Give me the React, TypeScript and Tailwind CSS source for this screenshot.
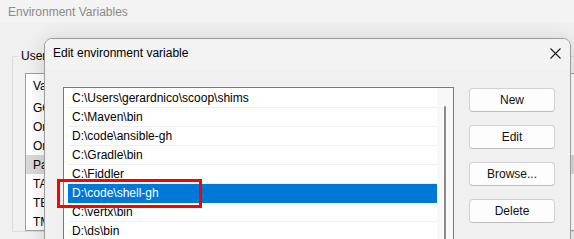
import React from "react";

const paths = [
  "C:\\Users\\gerardnico\\scoop\\shims",
  "C:\\Maven\\bin",
  "D:\\code\\ansible-gh",
  "C:\\Gradle\\bin",
  "C:\\Fiddler",
  "D:\\code\\shell-gh",
  "C:\\vertx\\bin",
  "D:\\ds\\bin",
  "C:\\tools\\bin",
];

const userVars = ["GOPATH", "OneDrive", "OneDriveConsumer", "Path", "TABLEAU_HOME", "TEMP", "TMP"];

const buttons = ["New", "Edit", "Browse...", "Delete"];

export default function App() {
  const selected = 5;

  return (
    <div className="relative h-[239px] w-[574px] overflow-hidden bg-[#f0f0f0] font-['Liberation_Sans',Arial,sans-serif] text-[12px] text-black">
      {/* Background window: Environment Variables */}
      <div className="flex h-[23px] items-center bg-[#f3f3f3] px-[8px] text-[#8a8a8a]">Environment Variables</div>
      <fieldset className="mt-[26px] ml-[12px] w-[600px] border border-[#dcdcdc]">
        <legend className="ml-[5px] px-[3px] leading-[14px]">User variables for gerardnico</legend>
        <div className="mt-[10px] ml-[12px] h-[158px] w-[560px] border border-[#a0a0a0] bg-white">
          <div className="flex h-[24px] items-center px-[7px]">Variable</div>
          {userVars.map((v) => (
            <div
              key={v}
              className={`flex h-[19px] items-center px-[7px] ${v === "Path" ? "bg-[#d9d9d9]" : ""}`}
            >
              {v}
            </div>
          ))}
        </div>
      </fieldset>

      {/* Foreground dialog */}
      <div className="absolute top-[38px] left-[44px] flex h-[212px] w-[527px] flex-col overflow-hidden rounded-t-[8px] border border-[#9c9c9c] bg-[#f0f0f0] shadow-[0_2px_20px_rgba(0,0,0,0.14)]">
        <div className="flex h-[30px] shrink-0 items-start justify-between bg-[#f3f3f3] pt-[7px] pl-[8px]">
          <span className="leading-[14px]">Edit environment variable</span>
          <div className="flex h-[14px] w-[30px] items-center justify-center">
            <svg width="11" height="11" viewBox="0 0 11 11">
              <path d="M0.5 0.5L10.5 10.5M10.5 0.5L0.5 10.5" stroke="#1a1a1a" strokeWidth="1.1" />
            </svg>
          </div>
        </div>

        <div className="flex min-h-0 flex-1 pt-[18px] pl-[18px]">
          <div className="flex h-[200px] w-[391px] shrink-0 border border-[#7a7a7a] bg-white">
            <div className="flex-1 pt-[1px]">
              {paths.map((p, i) => (
                <div
                  key={p}
                  className={`ml-[4px] flex h-[19px] items-center border-b pl-[4px] ${
                    i === selected ? "border-[#0078d7] bg-[#0078d7] text-white" : "border-[#f0f0f0]"
                  }`}
                >
                  {p}
                </div>
              ))}
            </div>
            <div className="flex w-[16px] justify-center bg-[#f8f8f8] pt-[18px]">
              <div className="h-[200px] w-[2px] rounded-full bg-[#8a8a8a]" />
            </div>
          </div>

          <div className="ml-[15px] flex flex-col gap-[13px] pt-[1px]">
            {buttons.map((b) => (
              <button
                key={b}
                className="flex h-[24px] w-[86px] shrink-0 items-center justify-center rounded-[4px] border border-[#d0d0d0] border-b-[#bdbdbd] bg-[#fdfdfd] text-[#111]"
              >
                {b}
              </button>
            ))}
          </div>
        </div>
      </div>

      {/* Annotation around the selected entry */}
      <div className="absolute top-[179px] left-[57px] h-[29px] w-[145px] border-[3px] border-[#f00]" />
    </div>
  );
}
